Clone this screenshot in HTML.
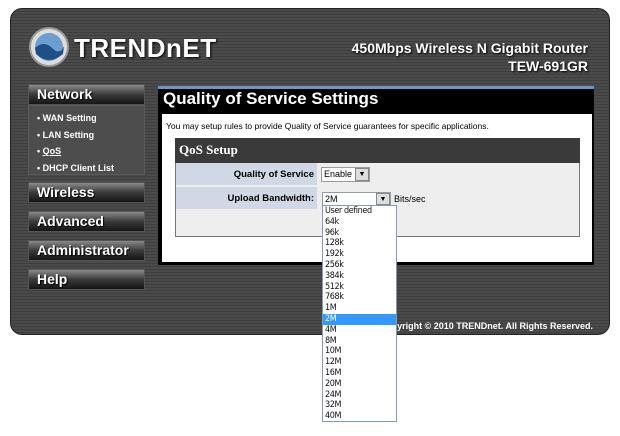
<!DOCTYPE html>
<html><head><style>
*{margin:0;padding:0;box-sizing:border-box}
body{width:620px;height:436px;background:#fff;font-family:"Liberation Sans",sans-serif;position:relative;overflow:hidden}
.outer{position:absolute;left:10px;top:8px;width:600px;height:327px;border-radius:12px;background:repeating-linear-gradient(180deg,#4a4a4a 0,#4a4a4a 2px,#3e3e3e 2px,#3e3e3e 3px);border:1px solid #222}
.abs{position:absolute}
.btn{position:absolute;left:28px;width:117px;height:21px;background:linear-gradient(#8a8a8a,#3a3a3a 50%,#151515);border:1px solid #555;color:#fff;font-weight:bold;font-size:14px;padding-left:8px;line-height:19px;text-shadow:1px 1px 1px #000}
.sub{position:absolute;left:28px;top:105px;width:117px;height:70px;background:#4d4d4d;border:1px solid #5a5a5a}
.sub div{color:#fff;font-size:9px;font-weight:bold;height:16.5px;padding-left:8px;line-height:16px}
.dd div{height:10.8px;line-height:10.8px;font-size:9px;padding-left:2px;color:#111;font-family:"DejaVu Sans Condensed","Liberation Sans",sans-serif;letter-spacing:-0.4px}
</style></head><body>
<div class="outer"></div>
<svg class="abs" style="left:28px;top:26px" width="42" height="42" viewBox="0 0 42 42"><circle cx="21" cy="21" r="19" fill="#ddd" stroke="#999" stroke-width="2"/><circle cx="21" cy="21" r="14" fill="#6a9fcf"/><path d="M7 22 Q16 14 24 22 T36 20 L35 28 Q21 40 8 28Z" fill="#1f4f88"/></svg>
<div class="abs" style="left:74px;top:33px;color:#fff;font-weight:bold;font-size:26px;letter-spacing:0.5px;text-shadow:1px 1px 2px #000">TRENDnET</div>
<div class="abs" style="right:32px;top:39px;color:#fff;font-weight:bold;font-size:14px;text-align:right;line-height:18px;text-shadow:1px 1px 2px #000">450Mbps Wireless N Gigabit Router<br>TEW-691GR</div>
<div class="btn" style="top:84px">Network</div>
<div class="sub" style="padding-top:4px"><div>• WAN Setting</div><div>• LAN Setting</div><div>• <u>QoS</u></div><div>• DHCP Client List</div></div>
<div class="btn" style="top:182px">Wireless</div>
<div class="btn" style="top:211px">Advanced</div>
<div class="btn" style="top:240px">Administrator</div>
<div class="btn" style="top:269px">Help</div>
<div class="abs" style="left:158px;top:86px;width:436px;height:179px;background:#000;border-top:3px solid #6f95c4"></div>
<div class="abs" style="left:163px;top:89px;color:#fff;font-weight:bold;font-size:17px">Quality of Service Settings</div>
<div class="abs" style="left:162px;top:114px;width:430px;height:148px;background:#fff"></div>
<div class="abs" style="left:166px;top:121px;font-size:8.5px;color:#000">You may setup rules to provide Quality of Service guarantees for specific applications.</div>
<div class="abs" style="left:175px;top:138px;width:405px;height:99px;background:#eee;border:1px solid #777"></div>
<div class="abs" style="left:175px;top:138px;width:405px;height:25px;background:#3a3a3a"></div>
<div class="abs" style="left:179px;top:142px;color:#fff;font-weight:bold;font-size:13px;font-family:'Liberation Serif',serif">QoS Setup</div>
<div class="abs" style="left:176px;top:163px;width:141px;height:22px;background:#cfd8e4"></div>
<div class="abs" style="left:176px;top:187px;width:141px;height:22px;background:#cfd8e4"></div>
<div class="abs" style="left:176px;top:169px;width:138px;text-align:right;font-size:9.5px;font-weight:bold">Quality of Service</div>
<div class="abs" style="left:176px;top:193px;width:138px;text-align:right;font-size:9.5px;font-weight:bold">Upload Bandwidth:</div>
<div class="abs" style="left:321px;top:167px;width:49px;height:15px;background:#fff;border:1px solid #999;font-size:9px;padding:1px 2px">Enable</div>
<div class="abs" style="left:355px;top:168px;width:14px;height:13px;background:#ddd;border:1px solid #888;font-size:7px;text-align:center;line-height:12px">▼</div>
<div class="abs" style="left:322px;top:192px;width:69px;height:14px;background:#fff;border:1px solid #999;font-size:9px;padding:1px 2px">2M</div>
<div class="abs" style="left:376px;top:193px;width:14px;height:12px;background:#ddd;border:1px solid #888;font-size:7px;text-align:center;line-height:11px">▼</div>
<div class="abs" style="left:394px;top:194px;font-size:9px">Bits/sec</div>
<div class="abs" style="right:27px;top:321px;color:#fff;font-size:9px;font-weight:bold">Copyright © 2010 TRENDnet. All Rights Reserved.</div>
<div class="abs dd" style="left:322px;top:205px;width:75px;height:217px;background:#fff;border:1px solid #7f9db9">
<div>User defined</div><div>64k</div><div>96k</div><div>128k</div><div>192k</div><div>256k</div><div>384k</div><div>512k</div><div>768k</div><div>1M</div><div style="background:#3399ff;color:#fff">2M</div><div>4M</div><div>8M</div><div>10M</div><div>12M</div><div>16M</div><div>20M</div><div>24M</div><div>32M</div><div>40M</div>
</div>
</body></html>
